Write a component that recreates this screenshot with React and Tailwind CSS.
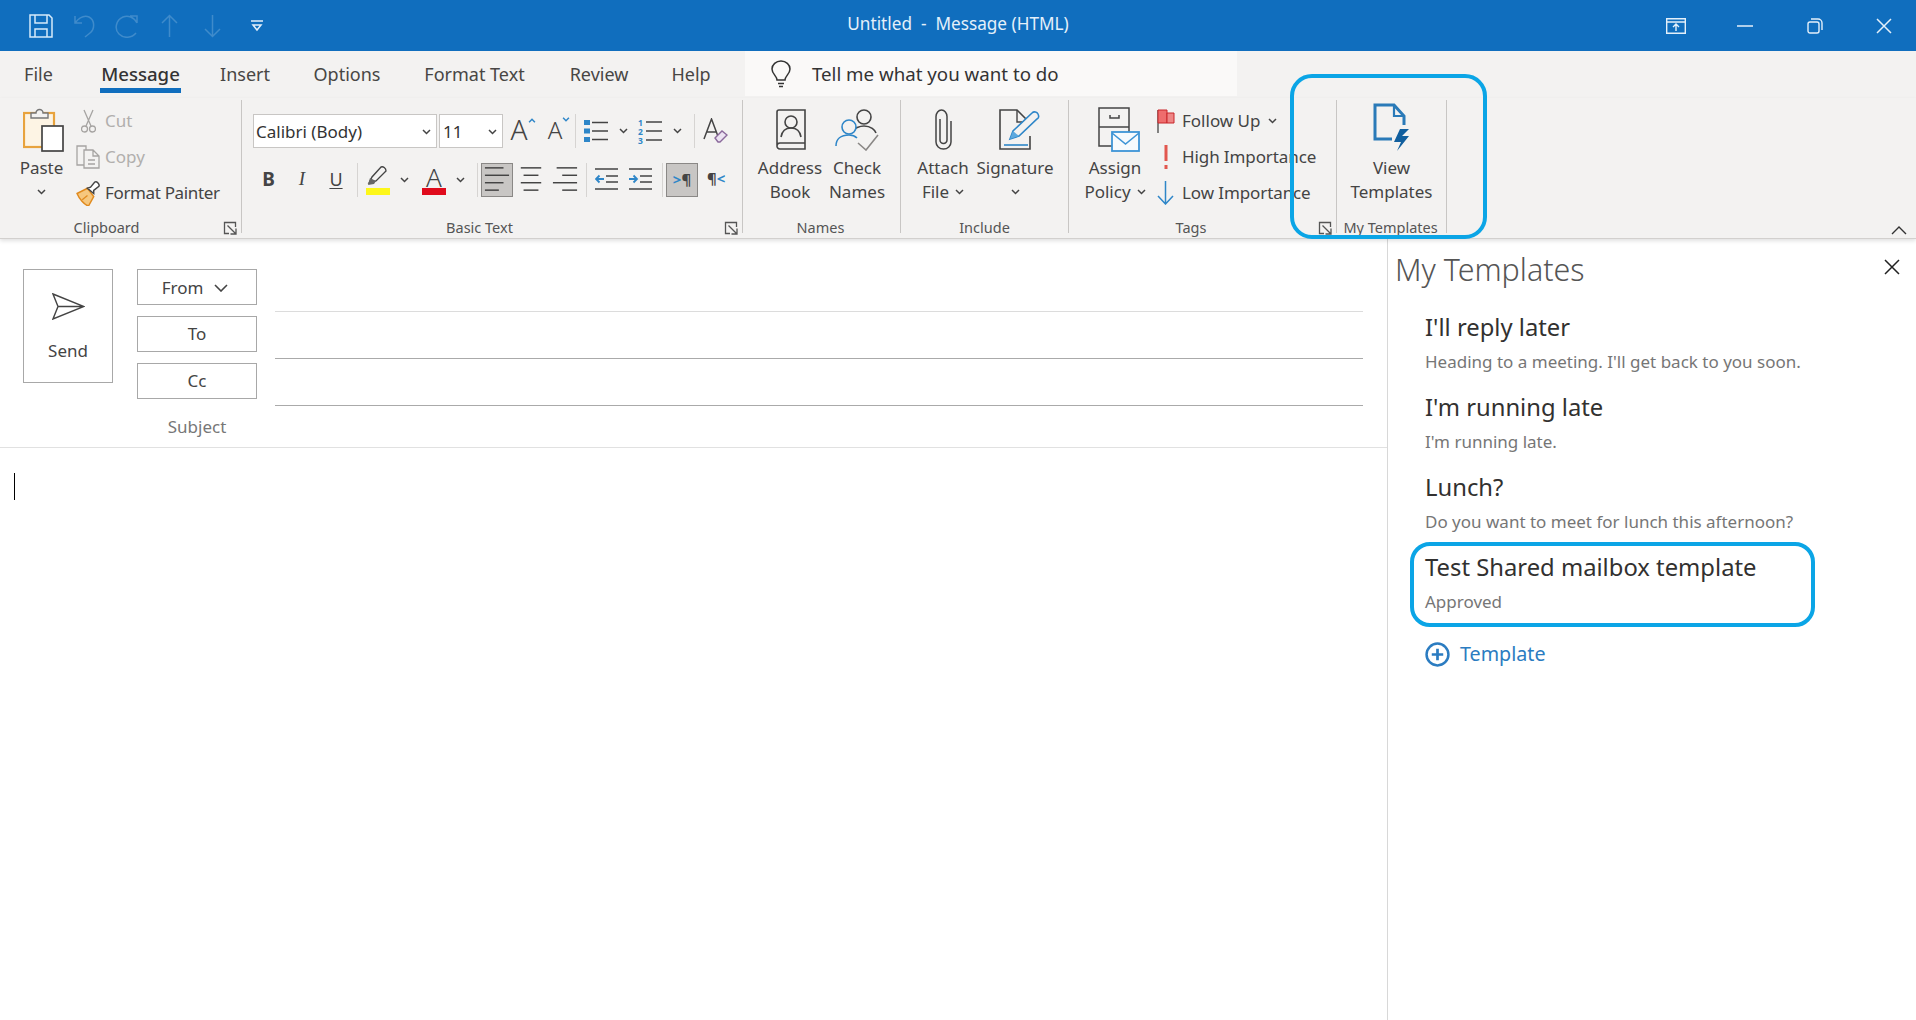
// Outlook "new message" window with the My Templates pane open

function Chevron({ className = "" }) {
    return (
        <svg width="9" height="6" viewBox="0 0 9 6" fill="none" className={className}>
            <path d="M1 1l3.5 3.5L8 1" stroke="#444" strokeWidth="1.5" />
        </svg>
    );
}

function Launcher() {
    return (
        <div className="w-[20px] mr-[1px] flex items-center justify-center shrink-0">
            <svg width="14" height="14" viewBox="0 0 14 14" fill="none" stroke="#555" strokeWidth="1.3">
                <path d="M12.5 6V1.500H1.500V12.500H6" />
                <path d="M4.500 4.500l8 8M13 7.500V13H7.500" />
            </svg>
        </div>
    );
}

function Sep({ className = "" }) {
    return <div className={`w-px h-[34px] bg-[#d6d4d2] shrink-0 ${className}`} />;
}

function Group({ width, label, labelPad = "", launcher, children }) {
    return (
        <div className={`${width} h-[133px] mt-[2px] border-r border-[#c8c6c4] flex flex-col shrink-0`}>
            <div className="h-[116px] shrink-0 flex">{children}</div>
            <div className="h-[24px] shrink-0 flex items-center text-[14.5px] text-[#555]">
                <span className={`flex-1 text-center whitespace-nowrap ${labelPad}`}>{label}</span>
                {launcher && <Launcher />}
            </div>
        </div>
    );
}

function BigButton({ width, icon, lines, chevron, tailChevron }) {
    return (
        <div className={`${width} pt-[2px] flex flex-col items-center text-[#444] leading-[24px]`}>
            <div className="h-[54px] flex items-center justify-center">{icon}</div>
            {lines.map((l, i) => (
                <div key={l} className="h-[24px] whitespace-nowrap flex items-center gap-[6px]">
                    {l}
                    {tailChevron && i === lines.length - 1 && <Chevron />}
                </div>
            ))}
            {chevron && (
                <div className="h-[24px] flex items-center">
                    <Chevron />
                </div>
            )}
        </div>
    );
}

function SmallRow({ icon, iconWidth, label, muted, chevron }) {
    return (
        <div className={`h-[36px] flex items-center whitespace-nowrap ${muted ? "text-[#b1afad]" : "text-[#444]"}`}>
            <div className={`${iconWidth} shrink-0 flex items-center`}>{icon}</div>
            {label}
            {chevron && <Chevron className="ml-[7px]" />}
        </div>
    );
}

function LinesIcon({ kind }) {
    const rows = {
        left: ["M0 2h20", "M0 10h26", "M0 18h20", "M0 26h15"],
        center: ["M2 2h22", "M5 10h16", "M2 18h22", "M5 26h16"],
        right: ["M4 2h22", "M10 10h16", "M0 18h26", "M10 26h16"],
    }[kind];
    return (
        <svg className="mb-[3px]" width="26" height="26" viewBox="0 0 26 28" fill="none" stroke="#444" strokeWidth="1.600">
            {rows.map((d) => (
                <path key={d} d={d} />
            ))}
        </svg>
    );
}

function IndentIcon({ dir }) {
    return (
        <svg className="mb-[3px]" width="24" height="22" viewBox="0 0 24 22" fill="none">
            <path d="M0 1h23M11 8h12M11 14h12M0 21h23" stroke="#444" strokeWidth="1.500" />
            {dir === "out" ? (
                <path d="M9 11H1M4.500 7.500L1 11l3.500 3.500" stroke="#2e86c8" strokeWidth="1.800" />
            ) : (
                <path d="M0 11h8M4.500 7.500L8 11l-3.500 3.500" stroke="#2e86c8" strokeWidth="1.800" />
            )}
        </svg>
    );
}

const ribbonTabs = [
    { label: "File", width: "w-[77px]" },
    { label: "Message", width: "w-[127px]", active: true },
    { label: "Insert", width: "w-[82px]" },
    { label: "Options", width: "w-[122px]" },
    { label: "Format Text", width: "w-[133px]" },
    { label: "Review", width: "w-[116px]" },
    { label: "Help", width: "w-[68px]" },
];

const templates = [
    { title: "I'll reply later", body: "Heading to a meeting. I'll get back to you soon." },
    { title: "I'm running late", body: "I'm running late." },
    { title: "Lunch?", body: "Do you want to meet for lunch this afternoon?" },
];

function TitleBar() {
    const dim = "#3f8bcb";
    return (
        <div className="h-[51px] bg-[#106ebe] grid grid-cols-[1fr_auto_1fr] items-center text-[#e4f0fa] shrink-0">
            <div className="flex items-center pl-[29px]">
                <svg width="24" height="24" viewBox="0 0 24 24" fill="none" stroke="#d5eafa" strokeWidth="1.500">
                    <path d="M1 1h19l3 3v19H1z" />
                    <path d="M6 1v8h12V1M6 23v-8h12v8" />
                </svg>
                <svg className="ml-[20px]" width="23" height="24" viewBox="0 0 23 24" fill="none" stroke={dim} strokeWidth="1.500">
                    <path d="M2 2v7h7M2 9c4-5 9-8 14-6 6 3 6 12 1 16l-5 4" />
                </svg>
                <svg className="ml-[18px]" width="25" height="24" viewBox="0 0 25 24" fill="none" stroke={dim} strokeWidth="1.500">
                    <path d="M16 2h7v7M23 9C20 3 14 1 9 3 2 6 0 15 5 20c5 5 13 4 17-1" />
                </svg>
                <svg className="ml-[22px]" width="17" height="24" viewBox="0 0 17 24" fill="none" stroke={dim} strokeWidth="1.500">
                    <path d="M8.500 23V2M1 9l7.500-7.500L16 9" />
                </svg>
                <svg className="ml-[26px]" width="17" height="24" viewBox="0 0 17 24" fill="none" stroke={dim} strokeWidth="1.500">
                    <path d="M8.500 1v21M1 15l7.500 7.500L16 15" />
                </svg>
                <svg className="ml-[30px]" width="12" height="12" viewBox="0 0 12 12" fill="none" stroke="#e4f0fa" strokeWidth="1.500">
                    <path d="M0 1h12M2 5l4 5 4-5z" />
                </svg>
            </div>
            <div className="text-[17.2px] text-center whitespace-pre pb-[4px]">Untitled  -  Message (HTML)</div>
            <div className="flex items-center justify-end pr-[24px]">
                <svg width="20" height="16" viewBox="0 0 20 16" fill="none" stroke="#e4f0fa" strokeWidth="1.400">
                    <path d="M.7.700h18.600v14.600H.7zM.7 4h18.600M10 13V6.500M7 9l3-3 3 3" />
                </svg>
                <svg className="ml-[51px]" width="16" height="2" viewBox="0 0 16 2">
                    <path d="M0 1h16" stroke="#e4f0fa" strokeWidth="1.500" />
                </svg>
                <svg className="ml-[54px]" width="16" height="16" viewBox="0 0 16 16" fill="none" stroke="#e4f0fa" strokeWidth="1.400">
                    <rect x="1" y="4" width="11" height="11" rx="2" />
                    <path d="M4 1h7a4 4 0 0 1 4 4v7" />
                </svg>
                <svg className="ml-[53px]" width="16" height="16" viewBox="0 0 16 16" fill="none" stroke="#e4f0fa" strokeWidth="1.500">
                    <path d="M1 1l14 14M15 1L1 15" />
                </svg>
            </div>
        </div>
    );
}

function TabRow() {
    return (
        <div className="h-[47px] flex bg-[#f3f2f1] shrink-0 text-[18px] text-[#484644]">
            {ribbonTabs.map((t) => (
                <div key={t.label} className={`${t.width} flex justify-center`}>
                    <div className={`h-[42px] whitespace-nowrap ${t.active ? "pt-[9px] border-b-[5px] border-[#106ebe] font-medium text-[18.6px] text-[#333] w-[81px] text-center" : "pt-[10px]"}`}>
                        {t.label}
                    </div>
                </div>
            ))}
            <div className="w-[492px] ml-[20px] h-[45px] bg-[#faf9f8] flex items-center pl-[26px] text-[#333] text-[18.7px]">
                <svg width="20" height="28" viewBox="0 0 20 28" fill="none" stroke="#333" strokeWidth="1.500">
                    <path d="M6 20c0-4-5-6-5-11a9 8 0 0 1 18 0c0 5-5 7-5 11z" />
                    <path d="M7 23.500h6M8 26.500h4" />
                </svg>
                <span className="ml-[21px] pt-[2px]">Tell me what you want to do</span>
            </div>
        </div>
    );
}

function Clipboard() {
    return (
        <Group width="w-[242px]" label="Clipboard" labelPad="pr-[7px]" launcher>
            <BigButton
                width="w-[76px] pl-[7px]"
                chevron
                lines={["Paste"]}
                icon={
                    <svg className="ml-[3px]" width="41" height="45" viewBox="0 0 41 45" fill="none">
                        <rect x="1" y="6" width="30" height="34" fill="#fdf4e4" stroke="#e8a33d" strokeWidth="2.200" />
                        <path d="M8 11V6h5a3.500 3.500 0 0 1 7 0h5v5z" fill="#f3f2f1" stroke="#777" strokeWidth="1.400" />
                        <rect x="19" y="19" width="21" height="25" fill="#fff" stroke="#444" strokeWidth="1.700" />
                    </svg>
                }
            />
            <div className="pt-[3px]">
                <SmallRow
                    muted
                    iconWidth="w-[29px] pl-[5px]"
                    label="Cut"
                    icon={
                        <svg width="15" height="24" viewBox="0 0 15 24" fill="none" stroke="#a6a4a2" strokeWidth="1.300">
                            <path d="M3 1l7 16M12 1L5 17" />
                            <circle cx="3.500" cy="20" r="3" />
                            <circle cx="11.500" cy="20" r="3" />
                        </svg>
                    }
                />
                <SmallRow
                    muted
                    iconWidth="w-[29px]"
                    label="Copy"
                    icon={
                        <svg width="24" height="24" viewBox="0 0 24 24" fill="none" stroke="#a6a4a2" strokeWidth="1.300">
                            <path d="M8 20H1V1h9v4" />
                            <path d="M8 5h9l6 6v12H8zM17 5v6h6M12 15h7M12 19h7" />
                        </svg>
                    }
                />
                <SmallRow
                    iconWidth="w-[29px]"
                    label={<span className="tracking-[-0.35px]">Format Painter</span>}
                    icon={
                        <svg width="25" height="25" viewBox="0 0 24 24" fill="none">
                            <path d="M1 12l10-5 6 8-5 9c-4-1-9-7-11-12z" fill="#f6c77e" stroke="#e08a1e" strokeWidth="1.400" />
                            <path d="M6 18l5-4" stroke="#e08a1e" strokeWidth="1.200" />
                            <path d="M11 7l3-1 4-5c2-1 5 2 4 4l-5 4v3z" fill="#fff" stroke="#444" strokeWidth="1.400" />
                        </svg>
                    }
                />
            </div>
        </Group>
    );
}

function BasicText() {
    return (
        <Group width="w-[501px]" label="Basic Text" labelPad="pr-[4px]" launcher>
            <div className="flex flex-col pt-[14px]">
                <div className="h-[34px] flex items-center pl-[11px]">
                    <div className="w-[184px] h-[34px] pt-[2px] bg-white border border-[#c8c6c4] flex items-center justify-between pl-[2px] pr-[5px] text-[#333]">
                        Calibri (Body)
                        <Chevron />
                    </div>
                    <div className="w-[64px] h-[34px] pt-[2px] ml-[2px] bg-white border border-[#c8c6c4] flex items-center justify-between pl-[3px] pr-[5px] text-[#333]">
                        11
                        <Chevron />
                    </div>
                    <div className="w-[40px] flex justify-center items-start text-[#444] text-[28px] font-light leading-[34px] -mt-[4px]">
                        A
                        <svg className="mt-[6px]" width="8" height="5" viewBox="0 0 9 6" fill="none">
                            <path d="M1 5l3.500-3.500L8 5" stroke="#2e86c8" strokeWidth="1.800" />
                        </svg>
                    </div>
                    <div className="w-[32px] flex justify-center items-start text-[#444] text-[24px] font-light leading-[34px] -mt-[2px]">
                        A
                        <svg className="mt-[4px]" width="8" height="5" viewBox="0 0 9 6" fill="none">
                            <path d="M1 1l3.500 3.500L8 1" stroke="#2e86c8" strokeWidth="1.800" />
                        </svg>
                    </div>
                    <Sep />
                    <svg className="ml-[8px]" width="24" height="24" viewBox="0 0 24 24" fill="none">
                        <path d="M0 1h6v5H0zM0 9.500h6v5H0zM0 18h6v5H0z" fill="#2e86c8" />
                        <path d="M8 3.500h16M8 12h16M8 20.500h16" stroke="#444" strokeWidth="1.600" />
                    </svg>
                    <Chevron className="ml-[11px]" />
                    <div className="ml-[10px] flex items-center">
                        <div className="w-[8px] flex flex-col text-[8.5px] leading-[9px] font-bold text-[#2e86c8]">
                            <div className="h-[9px]">1</div>
                            <div className="h-[9px]">2</div>
                            <div className="h-[9px]">3</div>
                        </div>
                        <svg width="16" height="26" viewBox="0 0 16 26" fill="none">
                            <path d="M0 4h16M0 13h16M0 22h16" stroke="#444" strokeWidth="1.600" />
                        </svg>
                    </div>
                    <Chevron className="ml-[11px]" />
                    <Sep className="ml-[12px]" />
                    <svg className="ml-[8px]" width="25" height="26" viewBox="0 0 25 26" fill="none">
                        <path d="M1 21L8.500 1 16 21M3.500 14h10" stroke="#444" strokeWidth="1.500" />
                        <path d="M12 20l7-7 5 4-7 7h-2z" fill="#ece3f2" stroke="#8b6a9c" strokeWidth="1.400" />
                    </svg>
                </div>
                <div className="h-[34px] mt-[15px] flex items-center pl-[10px] text-[#444]">
                    <div className="w-[33px] pb-[2px] text-center font-bold text-[19px]">B</div>
                    <div className="w-[34px] pb-[2px] text-center italic text-[19px] font-['Liberation_Serif',serif]">I</div>
                    <div className="w-[34px] pb-[2px] text-center underline underline-offset-2 text-[18px]">U</div>
                    <Sep className="ml-[4px]" />
                    <div className="ml-[8px] w-[24px] h-[29px] flex flex-col items-center justify-between">
                        <svg width="22" height="20" viewBox="0 0 22 20" fill="none">
                            <path d="M2 17l3-6L14 1c2-1 5 1 5 4L9 15z" fill="#f3f2f1" stroke="#444" strokeWidth="1.400" />
                            <path d="M1 19l2-7 6 3-2 3z" fill="#666" />
                        </svg>
                        <div className="w-[24px] h-[7px] bg-[#fdf71a]" />
                    </div>
                    <Chevron className="ml-[10px]" />
                    <div className="ml-[13px] w-[24px] h-[29px] flex flex-col items-center justify-between">
                        <div className="text-[26px] font-light leading-[22px]">A</div>
                        <div className="w-[24px] h-[7px] bg-[#e00b1c]" />
                    </div>
                    <Chevron className="ml-[10px]" />
                    <Sep className="ml-[12px]" />
                    <div className="ml-[3px] w-[32px] h-[34px] bg-[#c8c6c4] border border-[#8a8886] flex items-center justify-center">
                        <LinesIcon kind="left" />
                    </div>
                    <div className="ml-[5px]"><LinesIcon kind="center" /></div>
                    <div className="ml-[8px]"><LinesIcon kind="right" /></div>
                    <Sep className="ml-[8px]" />
                    <div className="ml-[8px]"><IndentIcon dir="out" /></div>
                    <div className="ml-[10px]"><IndentIcon dir="in" /></div>
                    <Sep className="ml-[9px]" />
                    <div className="ml-[3px] w-[32px] h-[34px] pb-[2px] bg-[#c8c6c4] border border-[#8a8886] flex items-center justify-center text-[15px] font-bold">
                        <span className="text-[#2e86c8]">&gt;</span>¶
                    </div>
                    <div className="ml-[9px] pb-[3px] text-[15px] font-bold whitespace-nowrap">
                        ¶<span className="text-[#2e86c8]">&lt;</span>
                    </div>
                </div>
            </div>
        </Group>
    );
}

function Names() {
    return (
        <Group width="w-[158px]" label="Names" labelPad="pr-[2px]">
            <div className="flex pl-[12px]">
                <BigButton
                    width="w-[70px]"
                    lines={["Address", "Book"]}
                    icon={
                        <svg width="31" height="41" viewBox="0 0 31 41" fill="none" stroke="#444" strokeWidth="1.600">
                            <path d="M2 36V3a2 2 0 0 1 2-2h26v39H5a3 3 0 0 1-3-3.500A3 3 0 0 1 5 34h25" />
                            <circle cx="16" cy="13" r="6" />
                            <path d="M6 28c1-6 5-9 10-9s9 3 10 9" />
                        </svg>
                    }
                />
                <BigButton
                    width="w-[64px]"
                    lines={["Check", "Names"]}
                    icon={
                        <svg width="44" height="43" viewBox="0 0 44 43" fill="none" strokeWidth="1.600">
                            <circle cx="29" cy="9" r="7" stroke="#444" />
                            <path d="M20 21c-1 0 4-3 9-3 7 0 11 4 12 7" stroke="#444" />
                            <circle cx="14" cy="19" r="7" fill="#f3f2f1" stroke="#2e86c8" />
                            <path d="M1 38c0-7 5-11 13-11 3 0 6 1 8 3" stroke="#2e86c8" />
                            <path d="M23 35l8 7L43 27" stroke="#8a8886" />
                        </svg>
                    }
                />
            </div>
        </Group>
    );
}

function Include() {
    return (
        <Group width="w-[168px]" label="Include">
            <div className="flex pl-[8px]">
                <BigButton
                    width="w-[68px]"
                    tailChevron
                    lines={["Attach", "File"]}
                    icon={
                        <svg width="17" height="41" viewBox="0 0 17 41" fill="none" stroke="#444" strokeWidth="1.500">
                            <path d="M5 10v21a3.500 3.500 0 0 0 7 0V7.500a5.500 6.500 0 0 0-11 0V33a7.500 7 0 0 0 15 0V12" />
                        </svg>
                    }
                />
                <BigButton
                    width="w-[76px]"
                    chevron
                    lines={["Signature"]}
                    icon={
                        <svg className="ml-[9px]" width="41" height="41" viewBox="0 0 41 41" fill="none">
                            <path d="M31 27v13H1V1h17l12 12" stroke="#444" strokeWidth="1.600" />
                            <path d="M18 1v12h8" stroke="#444" strokeWidth="1.400" />
                            <path d="M11 30l3-8L33 4c2-2 5-1 6 1s1 4-1 5L20 27z" fill="#f3f2f1" stroke="#2e86c8" strokeWidth="1.600" />
                            <path d="M11 30l3-8 6 5z" fill="#5ca9df" />
                            <path d="M5 36h24" stroke="#2e86c8" strokeWidth="1.600" />
                        </svg>
                    }
                />
            </div>
        </Group>
    );
}

function Tags() {
    return (
        <Group width="w-[268px]" label="Tags" labelPad="pr-[2px]" launcher>
            <div className="flex pl-[14px]">
                <BigButton
                    width="w-[64px]"
                    tailChevron
                    lines={["Assign", "Policy"]}
                    icon={
                        <svg className="ml-[7px]" width="42" height="45" viewBox="0 0 42 45" fill="none">
                            <path d="M1 1h30v38H1zM1 20h30M12 8v3h9V8" stroke="#444" strokeWidth="1.500" />
                            <rect x="14" y="25" width="27" height="19" fill="#f6fafd" stroke="#3d94d6" strokeWidth="1.800" />
                            <path d="M14 26l13.500 11L41 26" stroke="#3d94d6" strokeWidth="1.600" />
                        </svg>
                    }
                />
                <div className="ml-[10px] pt-[3px]">
                    <SmallRow
                        iconWidth="w-[25px]"
                        label="Follow Up"
                        chevron
                        icon={
                            <svg width="18" height="24" viewBox="0 0 18 24" fill="none">
                                <path d="M1 1v23" stroke="#444" strokeWidth="1.300" />
                                <path d="M1 1h9v13H1z" fill="#ee6d6d" stroke="#c8262b" />
                                <path d="M10 4h7v10h-7z" fill="#ee8686" stroke="#c8262b" />
                            </svg>
                        }
                    />
                    <SmallRow
                        iconWidth="w-[25px] pl-[7px]"
                        label={<span className="tracking-[-0.1px]">High Importance</span>}
                        icon={
                            <svg width="4" height="24" viewBox="0 0 4 24" fill="#e2574f">
                                <path d="M.5 0h3v16h-3zM.5 20h3v4h-3z" />
                            </svg>
                        }
                    />
                    <SmallRow
                        iconWidth="w-[25px]"
                        label={<span className="tracking-[-0.1px]">Low Importance</span>}
                        icon={
                            <svg width="17" height="24" viewBox="0 0 17 24" fill="none" stroke="#2e86c8" strokeWidth="1.500">
                                <path d="M8.500 0v23M1 15l7.500 8L16 15" />
                            </svg>
                        }
                    />
                </div>
            </div>
        </Group>
    );
}

function MyTemplatesGroup() {
    return (
        <Group width="w-[110px]" label="My Templates" labelPad="pr-[2px]">
            <BigButton
                width="w-full"
                lines={["View", "Templates"]}
                icon={
                    <svg className="mb-[4px]" width="37" height="48" viewBox="0 0 37 48" fill="none">
                        <path d="M19 36H2V2h19l10 11v9" stroke="#2a7ab8" strokeWidth="3" />
                        <path d="M21 2v11h10" stroke="#2a7ab8" strokeWidth="2.200" />
                        <path d="M36 26h-9l-6 13h7l-4 9 12-15h-7z" fill="#115f9e" />
                    </svg>
                }
            />
        </Group>
    );
}

function Ribbon() {
    return (
        <div className="relative z-10 h-[141px] shrink-0 bg-[#f3f2f1] flex border-b border-[#d2d0ce] shadow-[0_2px_4px_rgba(0,0,0,0.12)] text-[17px]">
            <Clipboard />
            <BasicText />
            <Names />
            <Include />
            <Tags />
            <MyTemplatesGroup />
            <div className="flex-1 flex justify-end items-end pr-[9px] pb-[3px]">
                <svg width="16" height="9" viewBox="0 0 16 9" fill="none" stroke="#333" strokeWidth="1.400">
                    <path d="M1 8l7-7 7 7" />
                </svg>
            </div>
            {/* callout around the add-in button */}
            <div className="absolute left-[1290px] top-[-24px] w-[197px] h-[165px] border-4 border-[#0ba5e6] rounded-[22px]" />
        </div>
    );
}

function Compose() {
    const fieldBtn = "h-[36px] border border-[#a8a8a8] flex items-center justify-center text-[#444]";
    return (
        <div className="flex-1 flex flex-col min-w-0">
            <div className="h-[209px] border-b border-[#e1e1e1] flex pl-[23px] pt-[30px] text-[17px]">
                <div className="w-[90px] h-[114px] border border-[#a8a8a8] flex flex-col items-center pt-[23px] text-[#444]">
                    <svg width="33" height="27" viewBox="0 0 33 27" fill="none" stroke="#444" strokeWidth="1.400">
                        <path d="M1 1l31 12.500L1 26l5-12.500zM6 13.500h26" />
                    </svg>
                    <div className="mt-[18px]">Send</div>
                </div>
                <div className="w-[120px] ml-[24px] flex flex-col gap-[11px]">
                    <div className={`${fieldBtn} gap-[11px] pr-[4px] pt-[1px]`}>
                        From
                        <svg width="14" height="8" viewBox="0 0 14 8" fill="none" stroke="#444" strokeWidth="1.600">
                            <path d="M1 1l6 6 6-6" />
                        </svg>
                    </div>
                    <div className={fieldBtn}>To</div>
                    <div className={fieldBtn}>Cc</div>
                    <div className="h-[28px] mt-[3px] flex items-center justify-center text-[#777]">Subject</div>
                </div>
                <div className="w-[1088px] ml-[18px]">
                    <div className="h-[43px] border-b border-[#dcdcdc]" />
                    <div className="h-[47px] border-b border-[#aaaaaa]" />
                    <div className="h-[47px] border-b border-[#aaaaaa]" />
                </div>
            </div>
            <div className="pl-[14px] pt-[25px]">
                <div className="w-px h-[27px] bg-black" />
            </div>
        </div>
    );
}

function TemplatesPane() {
    const titleCls = "h-[36px] pt-[1px] flex items-center text-[23.8px] text-[#323130]";
    return (
        <div className="w-[529px] shrink-0 border-l border-[#d8d8d8]">
            <div className="h-[63px] flex justify-between items-center pl-[7px] pr-[16px]">
                <div className="text-[30.4px] font-light text-[#555] pb-[2px]">My Templates</div>
                <svg className="mb-[8px]" width="16" height="16" viewBox="0 0 16 16" fill="none" stroke="#222" strokeWidth="1.500">
                    <path d="M1 1l14 14M15 1L1 15" />
                </svg>
            </div>
            <div className="pt-[7px] pl-[37px]">
                {templates.map((t) => (
                    <div key={t.title} className="h-[70px] mb-[10px]">
                        <div className={titleCls}>{t.title}</div>
                        <div className="h-[34px] flex items-center text-[17px] text-[#767676]">{t.body}</div>
                    </div>
                ))}
                <div className="w-[405px] h-[85px] -ml-[15px] -mt-[7px] pl-[11px] pt-[3px] border-4 border-[#0ba5e6] rounded-[20px]">
                    <div className={titleCls}>Test Shared mailbox template</div>
                    <div className="h-[34px] flex items-center text-[17px] text-[#767676]">Approved</div>
                </div>
                <div className="h-[36px] mt-[9px] flex items-center gap-[10px] text-[19.7px] text-[#2b7cc1]">
                    <svg width="25" height="25" viewBox="0 0 24 24" fill="none" stroke="#2b7cc1" strokeWidth="2.400">
                        <circle cx="12" cy="12" r="10.500" />
                        <path d="M12 6.500v11M6.500 12h11" strokeWidth="2.600" />
                    </svg>
                    Template
                </div>
            </div>
        </div>
    );
}

export default function App() {
    return (
        <div className="w-[1916px] h-[1020px] flex flex-col overflow-hidden bg-white font-['Noto_Sans',sans-serif]">
            <TitleBar />
            <TabRow />
            <Ribbon />
            <div className="flex-1 flex min-h-0">
                <Compose />
                <TemplatesPane />
            </div>
        </div>
    );
}
